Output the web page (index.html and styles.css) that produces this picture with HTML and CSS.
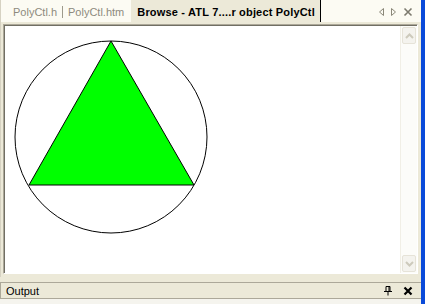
FILE: index.html
```html
<!DOCTYPE html>
<html>
<head>
<meta charset="utf-8">
<link rel="stylesheet" href="styles.css">
</head>
<body>
<div class="app">
  <div class="tabs">
    <div class="tab">PolyCtl.h</div>
    <div class="sep"></div>
    <div class="tab">PolyCtl.htm</div>
    <div class="tab active">Browse - ATL 7....r object PolyCtl</div>
    <div class="spacer"></div>
    <div class="navs">
      <svg width="8" height="10" viewBox="0 0 8 10"><path d="M6.5 1.5 L2.5 5 L6.5 8.5 Z" fill="none" stroke="#8a8778" stroke-width="1"/></svg>
      <svg width="8" height="10" viewBox="0 0 8 10"><path d="M1.5 1.5 L5.5 5 L1.5 8.5 Z" fill="none" stroke="#8a8778" stroke-width="1"/></svg>
      <svg width="10" height="10" viewBox="0 0 10 10"><path d="M1.5 1.5 L8.5 8.5 M8.5 1.5 L1.5 8.5" stroke="#7c7a6e" stroke-width="1.6"/></svg>
    </div>
  </div>
  <div class="frame">
    <div class="sunken">
      <div class="canvas">
        <svg width="395" height="244" viewBox="5 27 395 244">
          <circle cx="111" cy="138" r="96" fill="none" stroke="#000" stroke-width="1"/>
          <polygon points="111,42 29,186 194,186" fill="#00ff00" stroke="#000" stroke-width="1"/>
        </svg>
      </div>
      <div class="scroll">
        <div class="sbtn">
          <svg width="9" height="6" viewBox="0 0 9 6"><path d="M1 5 L4.5 1.5 L8 5" fill="none" stroke="#cdcabc" stroke-width="2"/></svg>
        </div>
        <div class="track"></div>
        <div class="sbtn">
          <svg width="9" height="6" viewBox="0 0 9 6"><path d="M1 1 L4.5 4.5 L8 1" fill="none" stroke="#cdcabc" stroke-width="2"/></svg>
        </div>
      </div>
    </div>
  </div>
  <div class="output">
    <div class="otitle">Output</div>
    <div class="spacer"></div>
    <svg class="pin" width="10" height="11" viewBox="0 0 10 11"><path d="M1 6.5 H9 M3 1.5 H7 V6.5 M3 1.5 V6.5 M5 6.5 V10.5" fill="none" stroke="#000" stroke-width="1"/><path d="M6 1.5 V6.5" stroke="#000" stroke-width="1"/></svg>
    <svg class="close" width="10" height="10" viewBox="0 0 10 10"><path d="M1.5 1.5 L8.5 8.5 M8.5 1.5 L1.5 8.5" stroke="#000" stroke-width="2.2"/></svg>
  </div>
  <div class="bottom"></div>
</div>
<div class="blue"></div>
</body>
</html>
```

FILE: styles.css
```css
html, body {
  margin: 0;
  padding: 0;
}
body {
  width: 425px;
  height: 304px;
  overflow: hidden;
  display: flex;
  background: #ece9d8;
  font-family: "Liberation Sans", Arial, sans-serif;
  font-size: 11px;
}
.app {
  flex: 1;
  display: flex;
  flex-direction: column;
  min-width: 0;
}
.tabs {
  height: 22px;
  background: #fcfbf3;
  border-left: 1px solid #d6d2c2;
  display: flex;
  align-items: stretch;
  padding-left: 7px;
}
.tab {
  display: flex;
  align-items: center;
  padding: 0 5px;
  color: #8d8a7e;
  white-space: nowrap;
  padding-top: 2px;
}
.sep {
  width: 1px;
  background: #9d9a8c;
  margin: 6px 0 4px 0;
}
.tab.active {
  background: #ece9d8;
  color: #000;
  font-weight: bold;
  letter-spacing: 0.18px;
  padding: 2px 5px 0 6px;
  border-right: 1px solid #000;
  margin-left: 2px;
}
.spacer {
  flex: 1;
}
.navs {
  display: flex;
  align-items: center;
  gap: 5px;
  padding-right: 8px;
  padding-top: 2px;
}
.frame {
  height: 250px;
  padding: 2px 3px 3px 2px;
  border-left: 1px solid #d6d2c2;
  display: flex;
}
.sunken {
  flex: 1;
  display: flex;
  border-top: 1px solid #aca899;
  border-left: 1px solid #aca899;
  border-right: 1px solid #fff;
  border-bottom: 1px solid #fff;
  box-shadow: inset 1px 1px 0 #716f64;
  background: #fff;
  padding: 1px 0 0 1px;
}
.canvas {
  width: 395px;
  height: 244px;
}
.canvas svg {
  display: block;
}
.scroll {
  flex: 1;
  display: flex;
  flex-direction: column;
  background: #fcfcf9;
  border-left: 1px solid #f1efe6;
  padding: 1px 1px 1px 1px;
}
.sbtn {
  height: 15px;
  border: 1px solid #e6e3d8;
  background: #f4f3ee;
  border-radius: 2px;
  display: flex;
  align-items: center;
  justify-content: center;
}
.track {
  flex: 1;
}
.output {
  margin-top: 5px;
  height: 15px;
  border-top: 1px solid #aca899;
  border-bottom: 1px solid #aca899;
  border-left: 1px solid #aca899;
  display: flex;
  align-items: center;
  padding-left: 5px;
  padding-right: 8px;
}
.otitle {
  color: #000;
}
.pin {
  margin-right: 10px;
}
.bottom {
  flex: 1;
  background: #f5f4ee;
}
.blue {
  width: 4px;
  background: #0a4ad9;
}
```
